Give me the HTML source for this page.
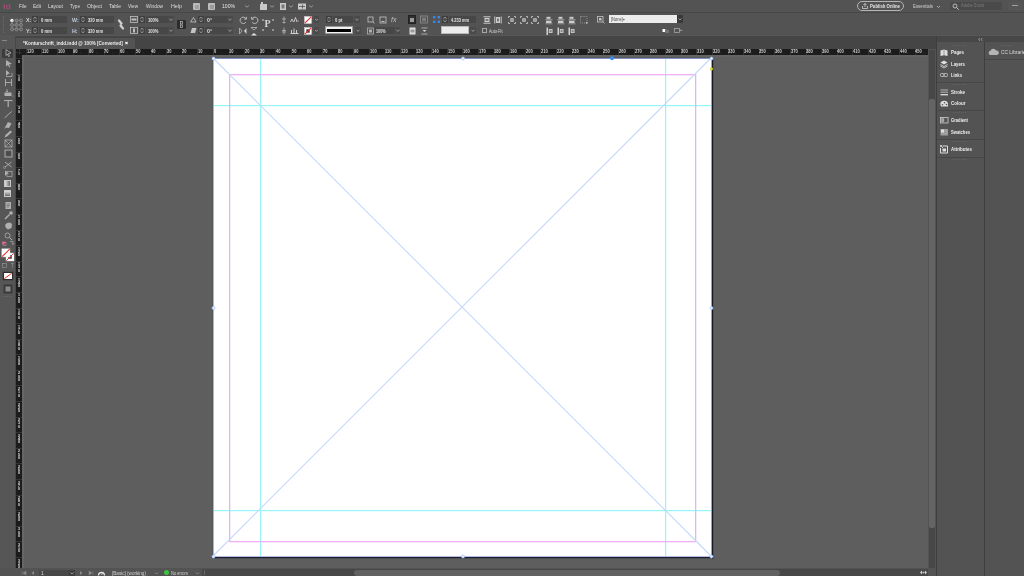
<!DOCTYPE html>
<html><head><meta charset="utf-8">
<style>
*{margin:0;padding:0;box-sizing:border-box}
html,body{width:1024px;height:576px;overflow:hidden;background:#535353;font-family:"Liberation Sans",sans-serif;color:#d8d8d8}
.a{position:absolute}
.rl{position:absolute;font-size:5px;line-height:5px;color:#d0d0d0;font-weight:bold;white-space:nowrap;transform:scaleX(0.8);transform-origin:0 0}
.rv{position:absolute}
.rv{font-size:4.4px;line-height:3.3px;color:#cccccc;font-weight:bold;text-align:center;word-break:break-all}
.t{position:absolute;font-size:6px;line-height:7px;white-space:nowrap;color:#dcdcdc}
</style></head><body><div style="position:absolute;left:0;top:0;width:1024px;height:576px;will-change:transform">

<div class="a" style="left:0;top:0;width:1024px;height:12px;background:#535353"></div>
<div class="a" style="left:0;top:12px;width:1024px;height:1px;background:#474747"></div>
<div class="a" style="left:0;top:13px;width:1024px;height:23px;background:#535353"></div>
<div class="a" style="left:0;top:35px;width:1024px;height:1px;background:#575757"></div>
<div class="a" style="left:0;top:36px;width:936px;height:13px;background:#454545"></div>
<div class="a" style="left:16px;top:38px;width:119px;height:11px;background:#535353"></div>
<div class="a" style="left:0;top:36px;width:16px;height:540px;background:#565656"></div>
<div class="a" style="left:22px;top:55px;width:906px;height:513px;background:#5e5e5e"></div>
<div class="a" style="left:16px;top:49px;width:912px;height:6px;background:#1c1c1c"></div>
<div class="a" style="left:16px;top:55px;width:6px;height:513px;background:#1c1c1c"></div>
<div class="a" style="left:22px;top:55px;width:1.5px;height:513px;background:#666666"></div>
<div class="a" style="left:22px;top:55px;width:906px;height:2px;background:#636363"></div>
<div class="a" style="left:928px;top:49px;width:8px;height:527px;background:#535353"></div>
<div class="a" style="left:929px;top:50px;width:6px;height:518px;background:#474747"></div>
<div class="a" style="left:929px;top:99px;width:6px;height:429px;background:#646464;border-radius:2px"></div>
<div class="a" style="left:0;top:568px;width:936px;height:8px;background:#535353"></div>
<div class="a" style="left:936px;top:36px;width:88px;height:540px;background:#474747"></div>
<div class="a" style="left:936px;top:42px;width:48px;height:534px;background:#535353"></div>
<div class="a" style="left:985px;top:42px;width:39px;height:534px;background:#535353"></div>
<div class="a" style="left:26px;top:49px;width:1px;height:6px;background:#343434"></div><div class="a" style="left:34px;top:52px;width:1px;height:2px;background:#262626"></div><div class="rl" style="left:26.5px;top:49.4px">120</div><div class="a" style="left:41px;top:49px;width:1px;height:6px;background:#343434"></div><div class="a" style="left:49px;top:52px;width:1px;height:2px;background:#262626"></div><div class="rl" style="left:42.1px;top:49.4px">110</div><div class="a" style="left:57px;top:49px;width:1px;height:6px;background:#343434"></div><div class="a" style="left:65px;top:52px;width:1px;height:2px;background:#262626"></div><div class="rl" style="left:57.7px;top:49.4px">100</div><div class="a" style="left:73px;top:49px;width:1px;height:6px;background:#343434"></div><div class="a" style="left:80px;top:52px;width:1px;height:2px;background:#262626"></div><div class="rl" style="left:73.3px;top:49.4px">90</div><div class="a" style="left:88px;top:49px;width:1px;height:6px;background:#343434"></div><div class="a" style="left:96px;top:52px;width:1px;height:2px;background:#262626"></div><div class="rl" style="left:88.8px;top:49.4px">80</div><div class="a" style="left:104px;top:49px;width:1px;height:6px;background:#343434"></div><div class="a" style="left:112px;top:52px;width:1px;height:2px;background:#262626"></div><div class="rl" style="left:104.4px;top:49.4px">70</div><div class="a" style="left:119px;top:49px;width:1px;height:6px;background:#343434"></div><div class="a" style="left:127px;top:52px;width:1px;height:2px;background:#262626"></div><div class="rl" style="left:120.0px;top:49.4px">60</div><div class="a" style="left:135px;top:49px;width:1px;height:6px;background:#343434"></div><div class="a" style="left:143px;top:52px;width:1px;height:2px;background:#262626"></div><div class="rl" style="left:135.6px;top:49.4px">50</div><div class="a" style="left:151px;top:49px;width:1px;height:6px;background:#343434"></div><div class="a" style="left:158px;top:52px;width:1px;height:2px;background:#262626"></div><div class="rl" style="left:151.2px;top:49.4px">40</div><div class="a" style="left:166px;top:49px;width:1px;height:6px;background:#343434"></div><div class="a" style="left:174px;top:52px;width:1px;height:2px;background:#262626"></div><div class="rl" style="left:166.8px;top:49.4px">30</div><div class="a" style="left:182px;top:49px;width:1px;height:6px;background:#343434"></div><div class="a" style="left:190px;top:52px;width:1px;height:2px;background:#262626"></div><div class="rl" style="left:182.4px;top:49.4px">20</div><div class="a" style="left:197px;top:49px;width:1px;height:6px;background:#343434"></div><div class="a" style="left:205px;top:52px;width:1px;height:2px;background:#262626"></div><div class="rl" style="left:198.0px;top:49.4px">10</div><div class="a" style="left:213px;top:49px;width:1px;height:6px;background:#343434"></div><div class="a" style="left:221px;top:52px;width:1px;height:2px;background:#262626"></div><div class="rl" style="left:213.6px;top:49.4px">0</div><div class="a" style="left:229px;top:49px;width:1px;height:6px;background:#343434"></div><div class="a" style="left:236px;top:52px;width:1px;height:2px;background:#262626"></div><div class="rl" style="left:229.2px;top:49.4px">10</div><div class="a" style="left:244px;top:49px;width:1px;height:6px;background:#343434"></div><div class="a" style="left:252px;top:52px;width:1px;height:2px;background:#262626"></div><div class="rl" style="left:244.8px;top:49.4px">20</div><div class="a" style="left:260px;top:49px;width:1px;height:6px;background:#343434"></div><div class="a" style="left:268px;top:52px;width:1px;height:2px;background:#262626"></div><div class="rl" style="left:260.4px;top:49.4px">30</div><div class="a" style="left:275px;top:49px;width:1px;height:6px;background:#343434"></div><div class="a" style="left:283px;top:52px;width:1px;height:2px;background:#262626"></div><div class="rl" style="left:276.0px;top:49.4px">40</div><div class="a" style="left:291px;top:49px;width:1px;height:6px;background:#343434"></div><div class="a" style="left:299px;top:52px;width:1px;height:2px;background:#262626"></div><div class="rl" style="left:291.6px;top:49.4px">50</div><div class="a" style="left:307px;top:49px;width:1px;height:6px;background:#343434"></div><div class="a" style="left:314px;top:52px;width:1px;height:2px;background:#262626"></div><div class="rl" style="left:307.2px;top:49.4px">60</div><div class="a" style="left:322px;top:49px;width:1px;height:6px;background:#343434"></div><div class="a" style="left:330px;top:52px;width:1px;height:2px;background:#262626"></div><div class="rl" style="left:322.8px;top:49.4px">70</div><div class="a" style="left:338px;top:49px;width:1px;height:6px;background:#343434"></div><div class="a" style="left:346px;top:52px;width:1px;height:2px;background:#262626"></div><div class="rl" style="left:338.4px;top:49.4px">80</div><div class="a" style="left:353px;top:49px;width:1px;height:6px;background:#343434"></div><div class="a" style="left:361px;top:52px;width:1px;height:2px;background:#262626"></div><div class="rl" style="left:353.9px;top:49.4px">90</div><div class="a" style="left:369px;top:49px;width:1px;height:6px;background:#343434"></div><div class="a" style="left:377px;top:52px;width:1px;height:2px;background:#262626"></div><div class="rl" style="left:369.5px;top:49.4px">100</div><div class="a" style="left:385px;top:49px;width:1px;height:6px;background:#343434"></div><div class="a" style="left:392px;top:52px;width:1px;height:2px;background:#262626"></div><div class="rl" style="left:385.1px;top:49.4px">110</div><div class="a" style="left:400px;top:49px;width:1px;height:6px;background:#343434"></div><div class="a" style="left:408px;top:52px;width:1px;height:2px;background:#262626"></div><div class="rl" style="left:400.7px;top:49.4px">120</div><div class="a" style="left:416px;top:49px;width:1px;height:6px;background:#343434"></div><div class="a" style="left:424px;top:52px;width:1px;height:2px;background:#262626"></div><div class="rl" style="left:416.3px;top:49.4px">130</div><div class="a" style="left:431px;top:49px;width:1px;height:6px;background:#343434"></div><div class="a" style="left:439px;top:52px;width:1px;height:2px;background:#262626"></div><div class="rl" style="left:431.9px;top:49.4px">140</div><div class="a" style="left:447px;top:49px;width:1px;height:6px;background:#343434"></div><div class="a" style="left:455px;top:52px;width:1px;height:2px;background:#262626"></div><div class="rl" style="left:447.5px;top:49.4px">150</div><div class="a" style="left:462px;top:49px;width:1px;height:6px;background:#343434"></div><div class="a" style="left:470px;top:52px;width:1px;height:2px;background:#262626"></div><div class="rl" style="left:463.1px;top:49.4px">160</div><div class="a" style="left:478px;top:49px;width:1px;height:6px;background:#343434"></div><div class="a" style="left:486px;top:52px;width:1px;height:2px;background:#262626"></div><div class="rl" style="left:478.7px;top:49.4px">170</div><div class="a" style="left:494px;top:49px;width:1px;height:6px;background:#343434"></div><div class="a" style="left:501px;top:52px;width:1px;height:2px;background:#262626"></div><div class="rl" style="left:494.3px;top:49.4px">180</div><div class="a" style="left:509px;top:49px;width:1px;height:6px;background:#343434"></div><div class="a" style="left:517px;top:52px;width:1px;height:2px;background:#262626"></div><div class="rl" style="left:509.9px;top:49.4px">190</div><div class="a" style="left:525px;top:49px;width:1px;height:6px;background:#343434"></div><div class="a" style="left:533px;top:52px;width:1px;height:2px;background:#262626"></div><div class="rl" style="left:525.5px;top:49.4px">200</div><div class="a" style="left:540px;top:49px;width:1px;height:6px;background:#343434"></div><div class="a" style="left:548px;top:52px;width:1px;height:2px;background:#262626"></div><div class="rl" style="left:541.1px;top:49.4px">210</div><div class="a" style="left:556px;top:49px;width:1px;height:6px;background:#343434"></div><div class="a" style="left:564px;top:52px;width:1px;height:2px;background:#262626"></div><div class="rl" style="left:556.7px;top:49.4px">220</div><div class="a" style="left:572px;top:49px;width:1px;height:6px;background:#343434"></div><div class="a" style="left:579px;top:52px;width:1px;height:2px;background:#262626"></div><div class="rl" style="left:572.3px;top:49.4px">230</div><div class="a" style="left:587px;top:49px;width:1px;height:6px;background:#343434"></div><div class="a" style="left:595px;top:52px;width:1px;height:2px;background:#262626"></div><div class="rl" style="left:587.9px;top:49.4px">240</div><div class="a" style="left:603px;top:49px;width:1px;height:6px;background:#343434"></div><div class="a" style="left:611px;top:52px;width:1px;height:2px;background:#262626"></div><div class="rl" style="left:603.4px;top:49.4px">250</div><div class="a" style="left:618px;top:49px;width:1px;height:6px;background:#343434"></div><div class="a" style="left:626px;top:52px;width:1px;height:2px;background:#262626"></div><div class="rl" style="left:619.0px;top:49.4px">260</div><div class="a" style="left:634px;top:49px;width:1px;height:6px;background:#343434"></div><div class="a" style="left:642px;top:52px;width:1px;height:2px;background:#262626"></div><div class="rl" style="left:634.6px;top:49.4px">270</div><div class="a" style="left:650px;top:49px;width:1px;height:6px;background:#343434"></div><div class="a" style="left:657px;top:52px;width:1px;height:2px;background:#262626"></div><div class="rl" style="left:650.2px;top:49.4px">280</div><div class="a" style="left:665px;top:49px;width:1px;height:6px;background:#343434"></div><div class="a" style="left:673px;top:52px;width:1px;height:2px;background:#262626"></div><div class="rl" style="left:665.8px;top:49.4px">290</div><div class="a" style="left:681px;top:49px;width:1px;height:6px;background:#343434"></div><div class="a" style="left:689px;top:52px;width:1px;height:2px;background:#262626"></div><div class="rl" style="left:681.4px;top:49.4px">300</div><div class="a" style="left:696px;top:49px;width:1px;height:6px;background:#343434"></div><div class="a" style="left:704px;top:52px;width:1px;height:2px;background:#262626"></div><div class="rl" style="left:697.0px;top:49.4px">310</div><div class="a" style="left:712px;top:49px;width:1px;height:6px;background:#343434"></div><div class="a" style="left:720px;top:52px;width:1px;height:2px;background:#262626"></div><div class="rl" style="left:712.6px;top:49.4px">320</div><div class="a" style="left:728px;top:49px;width:1px;height:6px;background:#343434"></div><div class="a" style="left:735px;top:52px;width:1px;height:2px;background:#262626"></div><div class="rl" style="left:728.2px;top:49.4px">330</div><div class="a" style="left:743px;top:49px;width:1px;height:6px;background:#343434"></div><div class="a" style="left:751px;top:52px;width:1px;height:2px;background:#262626"></div><div class="rl" style="left:743.8px;top:49.4px">340</div><div class="a" style="left:759px;top:49px;width:1px;height:6px;background:#343434"></div><div class="a" style="left:767px;top:52px;width:1px;height:2px;background:#262626"></div><div class="rl" style="left:759.4px;top:49.4px">350</div><div class="a" style="left:774px;top:49px;width:1px;height:6px;background:#343434"></div><div class="a" style="left:782px;top:52px;width:1px;height:2px;background:#262626"></div><div class="rl" style="left:775.0px;top:49.4px">360</div><div class="a" style="left:790px;top:49px;width:1px;height:6px;background:#343434"></div><div class="a" style="left:798px;top:52px;width:1px;height:2px;background:#262626"></div><div class="rl" style="left:790.6px;top:49.4px">370</div><div class="a" style="left:806px;top:49px;width:1px;height:6px;background:#343434"></div><div class="a" style="left:813px;top:52px;width:1px;height:2px;background:#262626"></div><div class="rl" style="left:806.2px;top:49.4px">380</div><div class="a" style="left:821px;top:49px;width:1px;height:6px;background:#343434"></div><div class="a" style="left:829px;top:52px;width:1px;height:2px;background:#262626"></div><div class="rl" style="left:821.8px;top:49.4px">390</div><div class="a" style="left:837px;top:49px;width:1px;height:6px;background:#343434"></div><div class="a" style="left:845px;top:52px;width:1px;height:2px;background:#262626"></div><div class="rl" style="left:837.4px;top:49.4px">400</div><div class="a" style="left:852px;top:49px;width:1px;height:6px;background:#343434"></div><div class="a" style="left:860px;top:52px;width:1px;height:2px;background:#262626"></div><div class="rl" style="left:852.9px;top:49.4px">410</div><div class="a" style="left:868px;top:49px;width:1px;height:6px;background:#343434"></div><div class="a" style="left:876px;top:52px;width:1px;height:2px;background:#262626"></div><div class="rl" style="left:868.5px;top:49.4px">420</div><div class="a" style="left:884px;top:49px;width:1px;height:6px;background:#343434"></div><div class="a" style="left:891px;top:52px;width:1px;height:2px;background:#262626"></div><div class="rl" style="left:884.1px;top:49.4px">430</div><div class="a" style="left:899px;top:49px;width:1px;height:6px;background:#343434"></div><div class="a" style="left:907px;top:52px;width:1px;height:2px;background:#262626"></div><div class="rl" style="left:899.7px;top:49.4px">440</div><div class="a" style="left:915px;top:49px;width:1px;height:6px;background:#343434"></div><div class="a" style="left:923px;top:52px;width:1px;height:2px;background:#262626"></div><div class="rl" style="left:915.3px;top:49.4px">450</div><div class="a" style="left:0;top:0;width:1024px;height:568px;overflow:hidden"><div class="a" style="left:16px;top:58px;width:6px;height:1px;background:#343434"></div><div class="a" style="left:19px;top:66px;width:2px;height:1px;background:#262626"></div><div class="rv" style="left:16.5px;top:59.5px;width:5px">0</div><div class="a" style="left:16px;top:74px;width:6px;height:1px;background:#343434"></div><div class="a" style="left:19px;top:81px;width:2px;height:1px;background:#262626"></div><div class="rv" style="left:16.5px;top:75.1px;width:5px">1<br>0</div><div class="a" style="left:16px;top:89px;width:6px;height:1px;background:#343434"></div><div class="a" style="left:19px;top:97px;width:2px;height:1px;background:#262626"></div><div class="rv" style="left:16.5px;top:90.7px;width:5px">2<br>0</div><div class="a" style="left:16px;top:105px;width:6px;height:1px;background:#343434"></div><div class="a" style="left:19px;top:113px;width:2px;height:1px;background:#262626"></div><div class="rv" style="left:16.5px;top:106.3px;width:5px">3<br>0</div><div class="a" style="left:16px;top:120px;width:6px;height:1px;background:#343434"></div><div class="a" style="left:19px;top:128px;width:2px;height:1px;background:#262626"></div><div class="rv" style="left:16.5px;top:121.9px;width:5px">4<br>0</div><div class="a" style="left:16px;top:136px;width:6px;height:1px;background:#343434"></div><div class="a" style="left:19px;top:144px;width:2px;height:1px;background:#262626"></div><div class="rv" style="left:16.5px;top:137.5px;width:5px">5<br>0</div><div class="a" style="left:16px;top:152px;width:6px;height:1px;background:#343434"></div><div class="a" style="left:19px;top:159px;width:2px;height:1px;background:#262626"></div><div class="rv" style="left:16.5px;top:153.1px;width:5px">6<br>0</div><div class="a" style="left:16px;top:167px;width:6px;height:1px;background:#343434"></div><div class="a" style="left:19px;top:175px;width:2px;height:1px;background:#262626"></div><div class="rv" style="left:16.5px;top:168.7px;width:5px">7<br>0</div><div class="a" style="left:16px;top:183px;width:6px;height:1px;background:#343434"></div><div class="a" style="left:19px;top:191px;width:2px;height:1px;background:#262626"></div><div class="rv" style="left:16.5px;top:184.2px;width:5px">8<br>0</div><div class="a" style="left:16px;top:198px;width:6px;height:1px;background:#343434"></div><div class="a" style="left:19px;top:206px;width:2px;height:1px;background:#262626"></div><div class="rv" style="left:16.5px;top:199.8px;width:5px">9<br>0</div><div class="a" style="left:16px;top:214px;width:6px;height:1px;background:#343434"></div><div class="a" style="left:19px;top:222px;width:2px;height:1px;background:#262626"></div><div class="rv" style="left:16.5px;top:215.4px;width:5px">1<br>0<br>0</div><div class="a" style="left:16px;top:230px;width:6px;height:1px;background:#343434"></div><div class="a" style="left:19px;top:237px;width:2px;height:1px;background:#262626"></div><div class="rv" style="left:16.5px;top:231.0px;width:5px">1<br>1<br>0</div><div class="a" style="left:16px;top:245px;width:6px;height:1px;background:#343434"></div><div class="a" style="left:19px;top:253px;width:2px;height:1px;background:#262626"></div><div class="rv" style="left:16.5px;top:246.6px;width:5px">1<br>2<br>0</div><div class="a" style="left:16px;top:261px;width:6px;height:1px;background:#343434"></div><div class="a" style="left:19px;top:269px;width:2px;height:1px;background:#262626"></div><div class="rv" style="left:16.5px;top:262.2px;width:5px">1<br>3<br>0</div><div class="a" style="left:16px;top:276px;width:6px;height:1px;background:#343434"></div><div class="a" style="left:19px;top:284px;width:2px;height:1px;background:#262626"></div><div class="rv" style="left:16.5px;top:277.8px;width:5px">1<br>4<br>0</div><div class="a" style="left:16px;top:292px;width:6px;height:1px;background:#343434"></div><div class="a" style="left:19px;top:300px;width:2px;height:1px;background:#262626"></div><div class="rv" style="left:16.5px;top:293.4px;width:5px">1<br>5<br>0</div><div class="a" style="left:16px;top:308px;width:6px;height:1px;background:#343434"></div><div class="a" style="left:19px;top:315px;width:2px;height:1px;background:#262626"></div><div class="rv" style="left:16.5px;top:309.0px;width:5px">1<br>6<br>0</div><div class="a" style="left:16px;top:323px;width:6px;height:1px;background:#343434"></div><div class="a" style="left:19px;top:331px;width:2px;height:1px;background:#262626"></div><div class="rv" style="left:16.5px;top:324.6px;width:5px">1<br>7<br>0</div><div class="a" style="left:16px;top:339px;width:6px;height:1px;background:#343434"></div><div class="a" style="left:19px;top:346px;width:2px;height:1px;background:#262626"></div><div class="rv" style="left:16.5px;top:340.2px;width:5px">1<br>8<br>0</div><div class="a" style="left:16px;top:354px;width:6px;height:1px;background:#343434"></div><div class="a" style="left:19px;top:362px;width:2px;height:1px;background:#262626"></div><div class="rv" style="left:16.5px;top:355.8px;width:5px">1<br>9<br>0</div><div class="a" style="left:16px;top:370px;width:6px;height:1px;background:#343434"></div><div class="a" style="left:19px;top:378px;width:2px;height:1px;background:#262626"></div><div class="rv" style="left:16.5px;top:371.4px;width:5px">2<br>0<br>0</div><div class="a" style="left:16px;top:385px;width:6px;height:1px;background:#343434"></div><div class="a" style="left:19px;top:393px;width:2px;height:1px;background:#262626"></div><div class="rv" style="left:16.5px;top:387.0px;width:5px">2<br>1<br>0</div><div class="a" style="left:16px;top:401px;width:6px;height:1px;background:#343434"></div><div class="a" style="left:19px;top:409px;width:2px;height:1px;background:#262626"></div><div class="rv" style="left:16.5px;top:402.6px;width:5px">2<br>2<br>0</div><div class="a" style="left:16px;top:417px;width:6px;height:1px;background:#343434"></div><div class="a" style="left:19px;top:424px;width:2px;height:1px;background:#262626"></div><div class="rv" style="left:16.5px;top:418.2px;width:5px">2<br>3<br>0</div><div class="a" style="left:16px;top:432px;width:6px;height:1px;background:#343434"></div><div class="a" style="left:19px;top:440px;width:2px;height:1px;background:#262626"></div><div class="rv" style="left:16.5px;top:433.8px;width:5px">2<br>4<br>0</div><div class="a" style="left:16px;top:448px;width:6px;height:1px;background:#343434"></div><div class="a" style="left:19px;top:456px;width:2px;height:1px;background:#262626"></div><div class="rv" style="left:16.5px;top:449.3px;width:5px">2<br>5<br>0</div><div class="a" style="left:16px;top:463px;width:6px;height:1px;background:#343434"></div><div class="a" style="left:19px;top:471px;width:2px;height:1px;background:#262626"></div><div class="rv" style="left:16.5px;top:464.9px;width:5px">2<br>6<br>0</div><div class="a" style="left:16px;top:479px;width:6px;height:1px;background:#343434"></div><div class="a" style="left:19px;top:487px;width:2px;height:1px;background:#262626"></div><div class="rv" style="left:16.5px;top:480.5px;width:5px">2<br>7<br>0</div><div class="a" style="left:16px;top:495px;width:6px;height:1px;background:#343434"></div><div class="a" style="left:19px;top:502px;width:2px;height:1px;background:#262626"></div><div class="rv" style="left:16.5px;top:496.1px;width:5px">2<br>8<br>0</div><div class="a" style="left:16px;top:510px;width:6px;height:1px;background:#343434"></div><div class="a" style="left:19px;top:518px;width:2px;height:1px;background:#262626"></div><div class="rv" style="left:16.5px;top:511.7px;width:5px">2<br>9<br>0</div><div class="a" style="left:16px;top:526px;width:6px;height:1px;background:#343434"></div><div class="a" style="left:19px;top:534px;width:2px;height:1px;background:#262626"></div><div class="rv" style="left:16.5px;top:527.3px;width:5px">3<br>0<br>0</div><div class="a" style="left:16px;top:541px;width:6px;height:1px;background:#343434"></div><div class="a" style="left:19px;top:549px;width:2px;height:1px;background:#262626"></div><div class="rv" style="left:16.5px;top:542.9px;width:5px">3<br>1<br>0</div><div class="a" style="left:16px;top:557px;width:6px;height:1px;background:#343434"></div><div class="a" style="left:19px;top:565px;width:2px;height:1px;background:#262626"></div><div class="rv" style="left:16.5px;top:558.5px;width:5px">3<br>2<br>0</div></div>
<div class="a" style="left:213px;top:58px;width:499px;height:499px;background:#fff"></div>
<div class="a" style="left:712px;top:59px;width:1px;height:500px;background:#181a26;box-shadow:0.5px 0 0 rgba(30,32,48,0.4)"></div>
<div class="a" style="left:214px;top:557px;width:499px;height:1px;background:#1e2030;box-shadow:0 0.5px 0 rgba(30,32,48,0.5)"></div>
<div class="a" style="left:260px;top:58px;width:1px;height:499px;background:#98f4f6;box-shadow:1px 0 0 rgba(150,244,246,0.22)"></div><div class="a" style="left:665px;top:58px;width:1px;height:499px;background:#98f4f6;box-shadow:1px 0 0 rgba(150,244,246,0.22)"></div><div class="a" style="left:213px;top:105px;width:499px;height:1px;background:#98f4f6;box-shadow:0 1px 0 rgba(150,244,246,0.22)"></div><div class="a" style="left:213px;top:510px;width:499px;height:1px;background:#98f4f6;box-shadow:0 1px 0 rgba(150,244,246,0.22)"></div><div class="a" style="left:229px;top:74px;width:467px;height:1px;background:#f2b0f6;box-shadow:0 1px 0 rgba(240,176,246,0.3)"></div><div class="a" style="left:229px;top:541px;width:467px;height:1px;background:#f2b0f6;box-shadow:0 1px 0 rgba(240,176,246,0.3)"></div><div class="a" style="left:229px;top:74px;width:1px;height:468px;background:#d8b8f8;box-shadow:1px 0 0 rgba(216,184,248,0.3)"></div><div class="a" style="left:695px;top:74px;width:1px;height:468px;background:#d8b8f8;box-shadow:1px 0 0 rgba(216,184,248,0.3)"></div>
<svg class="a" style="left:0;top:0" width="1024" height="576" viewBox="0 0 1024 576"><line x1="213.5" y1="58.5" x2="711.5" y2="556.5" stroke="#c4d8fa" stroke-width="1.1"/><line x1="711" y1="58" x2="213" y2="556" stroke="#c4d8fa" stroke-width="1.1"/><path d="M213.5 556 V58" fill="none" stroke="#a8b0dc" stroke-width="1"/><path d="M213 58.5 H711" fill="none" stroke="#848cc4" stroke-width="1"/><path d="M212.5 557 V57.5 H712" fill="none" stroke="#545a5a" stroke-width="1"/><path d="M711.5 58 V556" fill="none" stroke="#98a2d8" stroke-width="1"/><path d="M712 556.5 H213" fill="none" stroke="#b4bce4" stroke-width="1"/><circle cx="213.5" cy="58.5" r="1.5" fill="#eef4ff" stroke="#9cbcf4" stroke-width="0.7"/><circle cx="213.5" cy="308.0" r="1.5" fill="#eef4ff" stroke="#9cbcf4" stroke-width="0.7"/><circle cx="213.5" cy="556.5" r="1.5" fill="#eef4ff" stroke="#9cbcf4" stroke-width="0.7"/><circle cx="463.0" cy="58.5" r="1.5" fill="#eef4ff" stroke="#9cbcf4" stroke-width="0.7"/><circle cx="463.0" cy="556.5" r="1.5" fill="#eef4ff" stroke="#9cbcf4" stroke-width="0.7"/><circle cx="711.5" cy="58.5" r="1.5" fill="#eef4ff" stroke="#9cbcf4" stroke-width="0.7"/><circle cx="711.5" cy="308.0" r="1.5" fill="#eef4ff" stroke="#9cbcf4" stroke-width="0.7"/><circle cx="711.5" cy="556.5" r="1.5" fill="#eef4ff" stroke="#9cbcf4" stroke-width="0.7"/><circle cx="612" cy="58.3" r="2" fill="#3a8cf2"/><circle cx="711.5" cy="69" r="1.4" fill="#e0e030" stroke="#b0b000" stroke-width="0.3"/></svg>
<div class="a" style="left:0px;top:0px;width:15px;height:12px;background:#4e5450;"></div><div class="a" style="left:2.8px;top:1.6px;font-size:8px;line-height:9px;color:#a54a72;font-weight:bold;white-space:nowrap;transform:scaleX(1.125);transform-origin:0 0;">Id</div><div class="a" style="left:19px;top:2.8px;font-size:5.5px;line-height:6.5px;color:#dedede;font-weight:normal;white-space:nowrap;transform:scaleX(0.846);transform-origin:0 0;">File</div><div class="a" style="left:33px;top:2.8px;font-size:5.5px;line-height:6.5px;color:#dedede;font-weight:normal;white-space:nowrap;transform:scaleX(0.844);transform-origin:0 0;">Edit</div><div class="a" style="left:48px;top:2.8px;font-size:5.5px;line-height:6.5px;color:#dedede;font-weight:normal;white-space:nowrap;transform:scaleX(0.908);transform-origin:0 0;">Layout</div><div class="a" style="left:70px;top:2.8px;font-size:5.5px;line-height:6.5px;color:#dedede;font-weight:normal;white-space:nowrap;transform:scaleX(0.839);transform-origin:0 0;">Type</div><div class="a" style="left:87px;top:2.8px;font-size:5.5px;line-height:6.5px;color:#dedede;font-weight:normal;white-space:nowrap;transform:scaleX(0.944);transform-origin:0 0;">Object</div><div class="a" style="left:109px;top:2.8px;font-size:5.5px;line-height:6.5px;color:#dedede;font-weight:normal;white-space:nowrap;transform:scaleX(0.913);transform-origin:0 0;">Table</div><div class="a" style="left:128px;top:2.8px;font-size:5.5px;line-height:6.5px;color:#dedede;font-weight:normal;white-space:nowrap;transform:scaleX(0.846);transform-origin:0 0;">View</div><div class="a" style="left:146px;top:2.8px;font-size:5.5px;line-height:6.5px;color:#dedede;font-weight:normal;white-space:nowrap;transform:scaleX(0.869);transform-origin:0 0;">Window</div><div class="a" style="left:171px;top:2.8px;font-size:5.5px;line-height:6.5px;color:#dedede;font-weight:normal;white-space:nowrap;transform:scaleX(0.972);transform-origin:0 0;">Help</div><div class="a" style="left:193px;top:3px;width:7px;height:7px;background:#bcbcbc;border-radius:1px"></div><div class="a" style="left:194.5px;top:4.5px;width:4px;height:4px;background:#a0a0a0;"></div><div class="a" style="left:208px;top:3px;width:7px;height:7px;background:#bcbcbc;border-radius:1px"></div><div class="a" style="left:209.5px;top:4.5px;width:4px;height:4px;background:#9a9a9a;"></div><div class="a" style="left:222px;top:2.8px;font-size:5.5px;line-height:6.5px;color:#e4e4e4;font-weight:normal;white-space:nowrap;transform:scaleX(0.924);transform-origin:0 0;">100%</div><svg class="a" style="left:244px;top:4px" width="6" height="4" viewBox="0 0 6 4"><path d="M1 1.5 L3 3.2 L5 1.5" fill="none" stroke="#a0a0a0" stroke-width="0.9"/></svg><div class="a" style="left:260px;top:4px;width:7px;height:6px;background:#c8c8c8;"></div><div class="a" style="left:261px;top:2px;width:2px;height:2px;background:#c8c8c8;"></div><svg class="a" style="left:269px;top:4px" width="6" height="4" viewBox="0 0 6 4"><path d="M1 1.5 L3 3.2 L5 1.5" fill="none" stroke="#a0a0a0" stroke-width="0.9"/></svg><svg class="a" style="left:279px;top:2px" width="8" height="9" viewBox="0 0 8 9"><rect x="1" y="1" width="6" height="7" fill="#c8c8c8"/><rect x="2.5" y="2.5" width="3" height="4" fill="#7a7a7a"/></svg><svg class="a" style="left:288px;top:4px" width="6" height="4" viewBox="0 0 6 4"><path d="M1 1.5 L3 3.2 L5 1.5" fill="none" stroke="#a0a0a0" stroke-width="0.9"/></svg><svg class="a" style="left:298px;top:3px" width="8" height="7" viewBox="0 0 8 7"><rect x="0" y="0.5" width="8" height="6" fill="#c8c8c8"/><rect x="4" y="1.5" width="0.8" height="4" fill="#555"/><rect x="1" y="3" width="6" height="0.8" fill="#555"/></svg><svg class="a" style="left:308px;top:4px" width="6" height="4" viewBox="0 0 6 4"><path d="M1 1.5 L3 3.2 L5 1.5" fill="none" stroke="#a0a0a0" stroke-width="0.9"/></svg><div class="a" style="left:857px;top:1px;width:47px;height:10px;border:1px solid #b4b4b4;border-radius:5px"></div><svg class="a" style="left:862px;top:3px" width="6" height="6" viewBox="0 0 6 6"><path d="M0.5 3 V5.5 H5.5 V3" fill="none" stroke="#d0d0d0" stroke-width="0.8"/><path d="M3 0.5 V4 M1.5 2 L3 0.5 L4.5 2" fill="none" stroke="#d0d0d0" stroke-width="0.8"/></svg><div class="a" style="left:870px;top:3px;font-size:5.2px;line-height:6.2px;color:#e4e4e4;font-weight:bold;white-space:nowrap;transform:scaleX(0.824);transform-origin:0 0;">Publish Online</div><div class="a" style="left:913px;top:3px;font-size:5.2px;line-height:6.2px;color:#cfcfcf;font-weight:normal;white-space:nowrap;transform:scaleX(0.844);transform-origin:0 0;">Essentials</div><svg class="a" style="left:936px;top:4.5px" width="5" height="4" viewBox="0 0 5 4"><path d="M1 1 L2.5 2.5 L4 1" fill="none" stroke="#c0c0c0" stroke-width="0.8"/></svg><div class="a" style="left:950px;top:2px;width:52px;height:8px;background:#4a4a4a;"></div><svg class="a" style="left:952px;top:2.5px" width="8" height="7" viewBox="0 0 8 7"><circle cx="3" cy="3" r="2" fill="none" stroke="#c4c4c4" stroke-width="0.9"/><path d="M4.5 4.5 L6.8 6.7" stroke="#c4c4c4" stroke-width="1"/></svg><div class="a" style="left:961px;top:3.3px;font-size:4.8px;line-height:5.8px;color:#7c7c7c;font-weight:normal;white-space:nowrap;transform:scaleX(0.845);transform-origin:0 0;">Adobe Stock</div><div class="a" style="left:1008px;top:2px;width:14px;height:8px;background:#565656;border-radius:2px"></div><div class="a" style="left:1012px;top:5px;width:6px;height:1.2px;background:#a0a0a0;"></div><div class="a" style="left:3px;top:16px;width:1px;height:1px;background:#6a6a6a;"></div><div class="a" style="left:3px;top:18px;width:1px;height:1px;background:#6a6a6a;"></div><div class="a" style="left:3px;top:20px;width:1px;height:1px;background:#6a6a6a;"></div><div class="a" style="left:3px;top:22px;width:1px;height:1px;background:#6a6a6a;"></div><div class="a" style="left:3px;top:24px;width:1px;height:1px;background:#6a6a6a;"></div><div class="a" style="left:3px;top:26px;width:1px;height:1px;background:#6a6a6a;"></div><div class="a" style="left:3px;top:28px;width:1px;height:1px;background:#6a6a6a;"></div><div class="a" style="left:3px;top:30px;width:1px;height:1px;background:#6a6a6a;"></div><div class="a" style="left:3px;top:32px;width:1px;height:1px;background:#6a6a6a;"></div><svg class="a" style="left:0px;top:0px" width="30" height="36" viewBox="0 0 30 36"><circle cx="12.0" cy="20.5" r="1.7" fill="#ffffff"/><circle cx="12.0" cy="24.9" r="1.5" fill="none" stroke="#a8a8a8" stroke-width="0.6"/><circle cx="12.0" cy="29.3" r="1.5" fill="none" stroke="#a8a8a8" stroke-width="0.6"/><circle cx="16.5" cy="20.5" r="1.5" fill="none" stroke="#a8a8a8" stroke-width="0.6"/><circle cx="16.5" cy="24.9" r="1.5" fill="none" stroke="#a8a8a8" stroke-width="0.6"/><circle cx="16.5" cy="29.3" r="1.5" fill="none" stroke="#a8a8a8" stroke-width="0.6"/><circle cx="21.0" cy="20.5" r="1.5" fill="none" stroke="#a8a8a8" stroke-width="0.6"/><circle cx="21.0" cy="24.9" r="1.5" fill="none" stroke="#a8a8a8" stroke-width="0.6"/><circle cx="21.0" cy="29.3" r="1.5" fill="none" stroke="#a8a8a8" stroke-width="0.6"/><path d="M12 20.5 H21 M12 24.9 H21 M12 29.3 H21 M12 20.5 V29.3 M16.5 20.5 V29.3 M21 20.5 V29.3" stroke="#8a8a8a" stroke-width="0.4"/></svg><div class="a" style="left:26px;top:16.6px;font-size:5.3px;line-height:6.3px;color:#d4d4d4;font-weight:bold;white-space:nowrap;">X:</div><div class="a" style="left:26px;top:27.6px;font-size:5.3px;line-height:6.3px;color:#d4d4d4;font-weight:bold;white-space:nowrap;">Y:</div><div class="a" style="left:32px;top:16px;width:6px;height:7px;background:#4a4a4a;border:0.5px solid #3e3e3e"></div><svg class="a" style="left:32px;top:16px" width="6" height="7" viewBox="0 0 6 7"><path d="M1.5 2.6 L3 1.2 L4.5 2.6" fill="none" stroke="#b8b8b8" stroke-width="0.7"/><path d="M1.5 4.4 L3 5.8 L4.5 4.4" fill="none" stroke="#b8b8b8" stroke-width="0.7"/></svg><div class="a" style="left:32px;top:27px;width:6px;height:7px;background:#4a4a4a;border:0.5px solid #3e3e3e"></div><svg class="a" style="left:32px;top:27px" width="6" height="7" viewBox="0 0 6 7"><path d="M1.5 2.6 L3 1.2 L4.5 2.6" fill="none" stroke="#b8b8b8" stroke-width="0.7"/><path d="M1.5 4.4 L3 5.8 L4.5 4.4" fill="none" stroke="#b8b8b8" stroke-width="0.7"/></svg><div class="a" style="left:39px;top:16px;width:28px;height:7px;background:#474747;"></div><div class="a" style="left:40.5px;top:16.6px;font-size:5.3px;line-height:6.3px;color:#e2e2e2;font-weight:bold;white-space:nowrap;transform:scaleX(0.794);transform-origin:0 0;">0 mm</div><div class="a" style="left:39px;top:27px;width:28px;height:7px;background:#474747;"></div><div class="a" style="left:40.5px;top:27.6px;font-size:5.3px;line-height:6.3px;color:#e2e2e2;font-weight:bold;white-space:nowrap;transform:scaleX(0.794);transform-origin:0 0;">0 mm</div><div class="a" style="left:72px;top:16.6px;font-size:5.3px;line-height:6.3px;color:#c0cce4;font-weight:bold;white-space:nowrap;">W:</div><div class="a" style="left:72px;top:27.6px;font-size:5.3px;line-height:6.3px;color:#c0cce4;font-weight:bold;white-space:nowrap;">H:</div><div class="a" style="left:80px;top:16px;width:6px;height:7px;background:#4a4a4a;border:0.5px solid #3e3e3e"></div><svg class="a" style="left:80px;top:16px" width="6" height="7" viewBox="0 0 6 7"><path d="M1.5 2.6 L3 1.2 L4.5 2.6" fill="none" stroke="#b8b8b8" stroke-width="0.7"/><path d="M1.5 4.4 L3 5.8 L4.5 4.4" fill="none" stroke="#b8b8b8" stroke-width="0.7"/></svg><div class="a" style="left:80px;top:27px;width:6px;height:7px;background:#4a4a4a;border:0.5px solid #3e3e3e"></div><svg class="a" style="left:80px;top:27px" width="6" height="7" viewBox="0 0 6 7"><path d="M1.5 2.6 L3 1.2 L4.5 2.6" fill="none" stroke="#b8b8b8" stroke-width="0.7"/><path d="M1.5 4.4 L3 5.8 L4.5 4.4" fill="none" stroke="#b8b8b8" stroke-width="0.7"/></svg><div class="a" style="left:86px;top:16px;width:28px;height:7px;background:#474747;"></div><div class="a" style="left:87.5px;top:16.6px;font-size:5.3px;line-height:6.3px;color:#e2e2e2;font-weight:bold;white-space:nowrap;transform:scaleX(0.760);transform-origin:0 0;">320 mm</div><div class="a" style="left:86px;top:27px;width:28px;height:7px;background:#474747;"></div><div class="a" style="left:87.5px;top:27.6px;font-size:5.3px;line-height:6.3px;color:#e2e2e2;font-weight:bold;white-space:nowrap;transform:scaleX(0.760);transform-origin:0 0;">320 mm</div><svg class="a" style="left:116px;top:19px" width="10" height="11" viewBox="0 0 10 11"><path d="M3 1.5 L5.5 4.5 M4.5 6.5 L7 9.5" stroke="#d0d0d0" stroke-width="2.2" stroke-linecap="round"/><path d="M4 4 L6 7" stroke="#d0d0d0" stroke-width="0.8"/></svg><svg class="a" style="left:130px;top:16px" width="8" height="7" viewBox="0 0 8 7"><rect x="0.5" y="0.5" width="7" height="6" fill="none" stroke="#c0c0c0" stroke-width="0.8"/><rect x="1.5" y="2.5" width="5" height="2" fill="#c0c0c0"/></svg><svg class="a" style="left:130px;top:27px" width="8" height="7" viewBox="0 0 8 7"><rect x="0.5" y="0.5" width="7" height="6" fill="none" stroke="#c0c0c0" stroke-width="0.8"/><rect x="3" y="1.5" width="2" height="4" fill="#c0c0c0"/></svg><div class="a" style="left:139px;top:16px;width:6px;height:7px;background:#4a4a4a;border:0.5px solid #3e3e3e"></div><svg class="a" style="left:139px;top:16px" width="6" height="7" viewBox="0 0 6 7"><path d="M1.5 2.6 L3 1.2 L4.5 2.6" fill="none" stroke="#b8b8b8" stroke-width="0.7"/><path d="M1.5 4.4 L3 5.8 L4.5 4.4" fill="none" stroke="#b8b8b8" stroke-width="0.7"/></svg><div class="a" style="left:139px;top:27px;width:6px;height:7px;background:#4a4a4a;border:0.5px solid #3e3e3e"></div><svg class="a" style="left:139px;top:27px" width="6" height="7" viewBox="0 0 6 7"><path d="M1.5 2.6 L3 1.2 L4.5 2.6" fill="none" stroke="#b8b8b8" stroke-width="0.7"/><path d="M1.5 4.4 L3 5.8 L4.5 4.4" fill="none" stroke="#b8b8b8" stroke-width="0.7"/></svg><div class="a" style="left:146px;top:16px;width:22px;height:7px;background:#474747;"></div><div class="a" style="left:147.5px;top:16.6px;font-size:5.3px;line-height:6.3px;color:#e2e2e2;font-weight:bold;white-space:nowrap;transform:scaleX(0.775);transform-origin:0 0;">100%</div><div class="a" style="left:146px;top:27px;width:22px;height:7px;background:#474747;"></div><div class="a" style="left:147.5px;top:27.6px;font-size:5.3px;line-height:6.3px;color:#e2e2e2;font-weight:bold;white-space:nowrap;transform:scaleX(0.775);transform-origin:0 0;">100%</div><div class="a" style="left:168px;top:16px;width:6px;height:7px;background:#4a4a4a;"></div><svg class="a" style="left:168px;top:16px" width="6" height="7" viewBox="0 0 6 7"><path d="M1.5 3 L3.0 4.3 L4.5 3" fill="none" stroke="#c0c0c0" stroke-width="0.7"/></svg><div class="a" style="left:168px;top:27px;width:6px;height:7px;background:#4a4a4a;"></div><svg class="a" style="left:168px;top:27px" width="6" height="7" viewBox="0 0 6 7"><path d="M1.5 3 L3.0 4.3 L4.5 3" fill="none" stroke="#c0c0c0" stroke-width="0.7"/></svg><div class="a" style="left:177px;top:20px;width:9px;height:9px;background:#2c2c2c;border-radius:1px"></div><svg class="a" style="left:177px;top:20px" width="9" height="9" viewBox="0 0 9 9"><rect x="3.5" y="1.5" width="2" height="2.5" fill="none" stroke="#bdbdbd" stroke-width="0.7"/><rect x="3.5" y="5" width="2" height="2.5" fill="none" stroke="#bdbdbd" stroke-width="0.7"/></svg><svg class="a" style="left:190px;top:16px" width="7" height="7" viewBox="0 0 7 7"><path d="M0.5 6 L6 6 L3.5 1.5 Z" fill="none" stroke="#c4c4c4" stroke-width="0.8"/></svg><svg class="a" style="left:190px;top:27px" width="7" height="7" viewBox="0 0 7 7"><path d="M2 1 L6.5 1 L5 6 L0.5 6 Z" fill="#c4c4c4"/></svg><div class="a" style="left:198px;top:16px;width:6px;height:7px;background:#4a4a4a;border:0.5px solid #3e3e3e"></div><svg class="a" style="left:198px;top:16px" width="6" height="7" viewBox="0 0 6 7"><path d="M1.5 2.6 L3 1.2 L4.5 2.6" fill="none" stroke="#b8b8b8" stroke-width="0.7"/><path d="M1.5 4.4 L3 5.8 L4.5 4.4" fill="none" stroke="#b8b8b8" stroke-width="0.7"/></svg><div class="a" style="left:198px;top:27px;width:6px;height:7px;background:#4a4a4a;border:0.5px solid #3e3e3e"></div><svg class="a" style="left:198px;top:27px" width="6" height="7" viewBox="0 0 6 7"><path d="M1.5 2.6 L3 1.2 L4.5 2.6" fill="none" stroke="#b8b8b8" stroke-width="0.7"/><path d="M1.5 4.4 L3 5.8 L4.5 4.4" fill="none" stroke="#b8b8b8" stroke-width="0.7"/></svg><div class="a" style="left:205px;top:16px;width:22px;height:7px;background:#474747;"></div><div class="a" style="left:206.5px;top:16.6px;font-size:5.3px;line-height:6.3px;color:#e2e2e2;font-weight:bold;white-space:nowrap;transform:scaleX(0.987);transform-origin:0 0;">0°</div><div class="a" style="left:205px;top:27px;width:22px;height:7px;background:#474747;"></div><div class="a" style="left:206.5px;top:27.6px;font-size:5.3px;line-height:6.3px;color:#e2e2e2;font-weight:bold;white-space:nowrap;transform:scaleX(0.987);transform-origin:0 0;">0°</div><div class="a" style="left:227px;top:16px;width:6px;height:7px;background:#4a4a4a;"></div><svg class="a" style="left:227px;top:16px" width="6" height="7" viewBox="0 0 6 7"><path d="M1.5 3 L3.0 4.3 L4.5 3" fill="none" stroke="#c0c0c0" stroke-width="0.7"/></svg><div class="a" style="left:227px;top:27px;width:6px;height:7px;background:#4a4a4a;"></div><svg class="a" style="left:227px;top:27px" width="6" height="7" viewBox="0 0 6 7"><path d="M1.5 3 L3.0 4.3 L4.5 3" fill="none" stroke="#c0c0c0" stroke-width="0.7"/></svg><svg class="a" style="left:239px;top:15.5px" width="9" height="9" viewBox="0 0 9 9"><path d="M6.9 6.2 A3.2 3.2 0 1 1 7.2 3" fill="none" stroke="#c4c4c4" stroke-width="0.9"/><path d="M7.6 0.8 L7.4 3.3 L5 3" fill="none" stroke="#c4c4c4" stroke-width="0.8"/></svg><svg class="a" style="left:250px;top:15.5px" width="9" height="9" viewBox="0 0 9 9"><path d="M2.1 6.2 A3.2 3.2 0 1 0 1.8 3" fill="none" stroke="#c4c4c4" stroke-width="0.9"/><path d="M1.4 0.8 L1.6 3.3 L4 3" fill="none" stroke="#c4c4c4" stroke-width="0.8"/></svg><svg class="a" style="left:239px;top:27px" width="8" height="8" viewBox="0 0 8 8"><path d="M0.5 1 L3 4 L0.5 7 Z" fill="none" stroke="#c4c4c4" stroke-width="0.7"/><path d="M7.5 1 L5 4 L7.5 7 Z" fill="#d0d0d0"/></svg><svg class="a" style="left:250px;top:27px" width="8" height="9" viewBox="0 0 8 9"><path d="M1 0.5 L4 3 L7 0.5 Z" fill="none" stroke="#c4c4c4" stroke-width="0.7"/><path d="M1 8.5 L4 6 L7 8.5 Z" fill="#e0e0e0"/></svg><div class="a" style="left:264.5px;top:18.5px;font-size:10px;line-height:11px;color:#d4d4d4;font-weight:bold;white-space:nowrap;font-family:'Liberation Serif',serif;line-height:10px">P</div><div class="a" style="left:262px;top:19px;width:1.5px;height:1.5px;background:#a8a8a8;border-radius:1px"></div><div class="a" style="left:272px;top:19px;width:1.5px;height:1.5px;background:#a8a8a8;border-radius:1px"></div><div class="a" style="left:262px;top:29px;width:1.5px;height:1.5px;background:#a8a8a8;border-radius:1px"></div><div class="a" style="left:272px;top:29px;width:1.5px;height:1.5px;background:#a8a8a8;border-radius:1px"></div><svg class="a" style="left:281px;top:16px" width="6" height="8" viewBox="0 0 6 8"><path d="M3 0.5 V7.5 M1 3 H5 M1.5 6.5 H4.5" stroke="#b8b8b8" stroke-width="0.8"/></svg><svg class="a" style="left:281px;top:27px" width="6" height="8" viewBox="0 0 6 8"><path d="M3 0.5 V7.5 M1 3.5 H5 M1 5 H5" stroke="#b8b8b8" stroke-width="0.8"/></svg><svg class="a" style="left:290px;top:16px" width="9" height="7" viewBox="0 0 9 7"><path d="M0.5 6 L2 3 L3.5 6 M4 6 L5.5 1.5 L7 6" fill="none" stroke="#d0d0d0" stroke-width="0.9"/><circle cx="8" cy="5" r="0.8" fill="#d88"/></svg><svg class="a" style="left:290px;top:27px" width="9" height="7" viewBox="0 0 9 7"><path d="M0.5 6.5 H8.5 M1.5 6 V3 M4 6 V1.5 M6.5 6 V3" fill="none" stroke="#d0d0d0" stroke-width="1"/></svg><svg class="a" style="left:304px;top:16px" width="8" height="8" viewBox="0 0 8 8"><rect x="0.5" y="0.5" width="7" height="7" fill="#ffffff" stroke="#cfcfcf" stroke-width="0.5"/><path d="M0.8 7.2 L7.2 0.8" stroke="#ee2a2a" stroke-width="1.1"/></svg><svg class="a" style="left:304px;top:27px" width="8" height="8" viewBox="0 0 8 8"><rect x="0.5" y="0.5" width="7" height="7" fill="#ffffff" stroke="#cfcfcf" stroke-width="0.5"/><rect x="2.3" y="2.3" width="3.4" height="3.4" fill="#3c3c3c"/><path d="M0.8 7.2 L7.2 0.8" stroke="#ee2a2a" stroke-width="1.1"/></svg><div class="a" style="left:314px;top:16px;width:5px;height:7px;background:#4a4a4a;"></div><svg class="a" style="left:314px;top:16px" width="5" height="7" viewBox="0 0 5 7"><path d="M1.0 3 L2.5 4.3 L4.0 3" fill="none" stroke="#c0c0c0" stroke-width="0.7"/></svg><div class="a" style="left:314px;top:27px;width:5px;height:7px;background:#4a4a4a;"></div><svg class="a" style="left:314px;top:27px" width="5" height="7" viewBox="0 0 5 7"><path d="M1.0 3 L2.5 4.3 L4.0 3" fill="none" stroke="#c0c0c0" stroke-width="0.7"/></svg><div class="a" style="left:326px;top:16px;width:6px;height:7px;background:#4a4a4a;border:0.5px solid #3e3e3e"></div><svg class="a" style="left:326px;top:16px" width="6" height="7" viewBox="0 0 6 7"><path d="M1.5 2.6 L3 1.2 L4.5 2.6" fill="none" stroke="#b8b8b8" stroke-width="0.7"/><path d="M1.5 4.4 L3 5.8 L4.5 4.4" fill="none" stroke="#b8b8b8" stroke-width="0.7"/></svg><div class="a" style="left:333px;top:16px;width:20px;height:7px;background:#474747;"></div><div class="a" style="left:334.5px;top:16.6px;font-size:5.3px;line-height:6.3px;color:#e2e2e2;font-weight:bold;white-space:nowrap;transform:scaleX(0.796);transform-origin:0 0;">0 pt</div><div class="a" style="left:354px;top:16px;width:6px;height:7px;background:#4a4a4a;"></div><svg class="a" style="left:354px;top:16px" width="6" height="7" viewBox="0 0 6 7"><path d="M1.5 3 L3.0 4.3 L4.5 3" fill="none" stroke="#c0c0c0" stroke-width="0.7"/></svg><div class="a" style="left:325px;top:26px;width:28px;height:8px;background:#f2f2f2;border:0.5px solid #999"></div><div class="a" style="left:327px;top:28.5px;width:24px;height:3px;background:#000000;"></div><div class="a" style="left:355px;top:27px;width:6px;height:7px;background:#4a4a4a;"></div><svg class="a" style="left:355px;top:27px" width="6" height="7" viewBox="0 0 6 7"><path d="M1.5 3 L3.0 4.3 L4.5 3" fill="none" stroke="#c0c0c0" stroke-width="0.7"/></svg><svg class="a" style="left:367px;top:16px" width="8" height="8" viewBox="0 0 8 8"><rect x="1" y="1" width="5" height="5" fill="none" stroke="#c4c4c4" stroke-width="0.8"/><path d="M6 6 L7.5 7.5" stroke="#c4c4c4" stroke-width="0.8"/></svg><svg class="a" style="left:379px;top:16px" width="8" height="8" viewBox="0 0 8 8"><rect x="1" y="1" width="6" height="6" fill="none" stroke="#c4c4c4" stroke-width="0.8"/><rect x="2.5" y="5" width="3" height="1" fill="#c4c4c4"/></svg><div class="a" style="left:391px;top:15.5px;font-size:7px;line-height:8px;color:#c0c0c0;font-weight:normal;white-space:nowrap;font-style:italic">fx</div><svg class="a" style="left:367px;top:27px" width="7" height="8" viewBox="0 0 7 8"><rect x="0.5" y="1" width="6" height="6" fill="none" stroke="#b0b0b0" stroke-width="0.8"/><rect x="2" y="2.5" width="3" height="3" fill="#b0b0b0"/></svg><div class="a" style="left:374px;top:27px;width:21px;height:7px;background:#474747;"></div><div class="a" style="left:375.5px;top:27.6px;font-size:5.3px;line-height:6.3px;color:#e2e2e2;font-weight:bold;white-space:nowrap;transform:scaleX(0.701);transform-origin:0 0;">100%</div><div class="a" style="left:396px;top:27px;width:4px;height:7px;background:#4a4a4a;"></div><svg class="a" style="left:396px;top:27px" width="4" height="7" viewBox="0 0 4 7"><path d="M0.5 3 L2.0 4.3 L3.5 3" fill="none" stroke="#c0c0c0" stroke-width="0.7"/></svg><div class="a" style="left:408px;top:15px;width:8px;height:9px;background:#2e2e2e;border:0.5px solid #222"></div><div class="a" style="left:410px;top:17.5px;width:4px;height:4px;background:#9a9a9a;"></div><svg class="a" style="left:420px;top:15px" width="8" height="9" viewBox="0 0 8 9"><rect x="0.5" y="1" width="7" height="7" fill="none" stroke="#8e8e8e" stroke-width="0.8"/><rect x="2" y="2.5" width="4" height="4" fill="#7a7a7a"/></svg><svg class="a" style="left:409px;top:27px" width="7" height="8" viewBox="0 0 7 8"><rect x="0.5" y="0.5" width="6" height="7" fill="#e0e0e0"/><rect x="1.5" y="2.5" width="4" height="3" fill="#9a9a9a"/></svg><svg class="a" style="left:421px;top:27px" width="7" height="8" viewBox="0 0 7 8"><path d="M0.5 1 H6.5 M0.5 7 H6.5" stroke="#c0c0c0" stroke-width="0.8"/><path d="M1.5 3 L3.5 5 L5.5 3 Z" fill="#d0d0d0"/></svg><svg class="a" style="left:432px;top:15px" width="9" height="9" viewBox="0 0 9 9"><rect x="1" y="1" width="2.4" height="2.4" fill="#2e8cf0"/><rect x="5.6" y="1" width="2.4" height="2.4" fill="#2e8cf0"/><rect x="1" y="5.6" width="2.4" height="2.4" fill="#2e8cf0"/><rect x="5.6" y="5.6" width="2.4" height="2.4" fill="#2e8cf0"/><path d="M3.4 2.2 H5.6 M3.4 6.8 H5.6 M2.2 3.4 V5.6 M6.8 3.4 V5.6" stroke="#885050" stroke-width="0.5"/></svg><div class="a" style="left:442px;top:16px;width:6px;height:7px;background:#4a4a4a;border:0.5px solid #3e3e3e"></div><svg class="a" style="left:442px;top:16px" width="6" height="7" viewBox="0 0 6 7"><path d="M1.5 2.6 L3 1.2 L4.5 2.6" fill="none" stroke="#b8b8b8" stroke-width="0.7"/><path d="M1.5 4.4 L3 5.8 L4.5 4.4" fill="none" stroke="#b8b8b8" stroke-width="0.7"/></svg><div class="a" style="left:449px;top:16px;width:27px;height:7px;background:#474747;"></div><div class="a" style="left:450.5px;top:16.6px;font-size:5.3px;line-height:6.3px;color:#e2e2e2;font-weight:bold;white-space:nowrap;transform:scaleX(0.745);transform-origin:0 0;">4.233 mm</div><div class="a" style="left:441px;top:26px;width:28px;height:8px;background:#ececec;border:0.7px solid #b8b8b8"></div><div class="a" style="left:470px;top:27px;width:6px;height:7px;background:#4a4a4a;"></div><svg class="a" style="left:470px;top:27px" width="6" height="7" viewBox="0 0 6 7"><path d="M1.5 3 L3.0 4.3 L4.5 3" fill="none" stroke="#c0c0c0" stroke-width="0.7"/></svg><div class="a" style="left:482px;top:27.5px;width:5px;height:5px;border:0.7px solid #a8a8a8"></div><div class="a" style="left:489px;top:27.6px;font-size:5px;line-height:6px;color:#d4d4d4;font-weight:normal;white-space:nowrap;transform:scaleX(0.771);transform-origin:0 0;">Auto-Fit</div><svg class="a" style="left:482.5px;top:16px" width="8" height="8" viewBox="0 0 8 8"><path d="M0.5 0.8 H7.5 M0.5 7.2 H7.5" stroke="#cdcdcd" stroke-width="1"/><rect x="1.5" y="2" width="5" height="4" fill="#cdcdcd"/><rect x="2.5" y="3" width="3" height="2" fill="#7a7a7a"/></svg><svg class="a" style="left:494px;top:16px" width="8" height="8" viewBox="0 0 8 8"><path d="M0.8 0.5 V7.5 M7.2 0.5 V7.5" stroke="#cdcdcd" stroke-width="1"/><rect x="2" y="1" width="4" height="6" fill="#cdcdcd"/><rect x="3" y="2.5" width="2" height="3" fill="#7a7a7a"/></svg><svg class="a" style="left:508px;top:16px" width="8" height="8" viewBox="0 0 8 8"><path d="M0.5 2 V0.5 H2 M6 0.5 H7.5 V2 M7.5 6 V7.5 H6 M2 7.5 H0.5 V6" fill="none" stroke="#cdcdcd" stroke-width="0.8"/><rect x="2.3" y="2.3" width="3.4" height="3.4" fill="#cdcdcd"/><rect x="3.3" y="3.3" width="1.4" height="1.4" fill="#6a6a6a"/></svg><svg class="a" style="left:519.5px;top:16px" width="8" height="8" viewBox="0 0 8 8"><path d="M0.5 2 V0.5 H2 M6 0.5 H7.5 V2 M7.5 6 V7.5 H6 M2 7.5 H0.5 V6" fill="none" stroke="#cdcdcd" stroke-width="0.8"/><rect x="2.3" y="2.3" width="3.4" height="3.4" fill="#cdcdcd"/><rect x="3.3" y="3.3" width="1.4" height="1.4" fill="#6a6a6a"/></svg><svg class="a" style="left:531px;top:16px" width="8" height="8" viewBox="0 0 8 8"><path d="M0.5 2 V0.5 H2 M6 0.5 H7.5 V2 M7.5 6 V7.5 H6 M2 7.5 H0.5 V6" fill="none" stroke="#cdcdcd" stroke-width="0.8"/><rect x="2.3" y="2.3" width="3.4" height="3.4" fill="#cdcdcd"/><rect x="3.3" y="3.3" width="1.4" height="1.4" fill="#6a6a6a"/></svg><svg class="a" style="left:545px;top:16px" width="8" height="9" viewBox="0 0 8 9"><rect x="1.5" y="0.8" width="4" height="2" fill="#cdcdcd"/><path d="M0.5 3.8 H7.5" stroke="#cdcdcd" stroke-width="0.7"/><rect x="1" y="4.8" width="5.5" height="2.2" fill="#cdcdcd"/><path d="M0.5 7.8 H7.5" stroke="#cdcdcd" stroke-width="0.6"/></svg><svg class="a" style="left:556.5px;top:16px" width="8" height="9" viewBox="0 0 8 9"><rect x="1.5" y="0.8" width="4" height="2" fill="#cdcdcd"/><path d="M0.5 3.8 H7.5" stroke="#cdcdcd" stroke-width="0.7"/><rect x="1" y="4.8" width="5.5" height="2.2" fill="#cdcdcd"/><path d="M0.5 7.8 H7.5" stroke="#cdcdcd" stroke-width="0.6"/></svg><svg class="a" style="left:568px;top:16px" width="8" height="9" viewBox="0 0 8 9"><rect x="1.5" y="0.8" width="4" height="2" fill="#cdcdcd"/><path d="M0.5 3.8 H7.5" stroke="#cdcdcd" stroke-width="0.7"/><rect x="1" y="4.8" width="5.5" height="2.2" fill="#cdcdcd"/><path d="M0.5 7.8 H7.5" stroke="#cdcdcd" stroke-width="0.6"/></svg><svg class="a" style="left:580px;top:16px" width="8" height="9" viewBox="0 0 8 9"><path d="M0.5 0.5 V7 H7.5 M0.5 0.5 H7 V7" fill="none" stroke="#b8b8b8" stroke-width="0.6" stroke-dasharray="1,1"/><circle cx="6.8" cy="6.8" r="0.9" fill="#c8c8c8"/></svg><svg class="a" style="left:597px;top:16px" width="8" height="8" viewBox="0 0 8 8"><rect x="0.5" y="0.5" width="5.5" height="5.5" fill="none" stroke="#c4c4c4" stroke-width="0.8"/><rect x="2" y="2" width="2.5" height="2.5" fill="#c4c4c4"/><path d="M5.5 5.5 L7.5 7.5" stroke="#c4c4c4" stroke-width="0.8"/></svg><svg class="a" style="left:546px;top:27px" width="8" height="9" viewBox="0 0 8 9"><rect x="0.5" y="0.5" width="1.5" height="7.5" fill="#d0d0d0"/><rect x="2.8" y="2" width="3.7" height="4" fill="#d0d0d0"/><rect x="3.6" y="2.8" width="2" height="2.4" fill="#888"/></svg><svg class="a" style="left:557px;top:27px" width="8" height="9" viewBox="0 0 8 9"><rect x="0.5" y="0.5" width="1.5" height="7.5" fill="#d0d0d0"/><rect x="2.8" y="2" width="3.7" height="4" fill="#d0d0d0"/><rect x="3.6" y="2.8" width="2" height="2.4" fill="#888"/></svg><svg class="a" style="left:568px;top:27px" width="8" height="9" viewBox="0 0 8 9"><rect x="0.5" y="0.5" width="1.5" height="7.5" fill="#d0d0d0"/><rect x="2.8" y="2" width="3.7" height="4" fill="#d0d0d0"/><rect x="3.6" y="2.8" width="2" height="2.4" fill="#888"/></svg><div class="a" style="left:609px;top:15px;width:68px;height:8px;background:#ececec;"></div><div class="a" style="left:611px;top:16.3px;font-size:5px;line-height:6px;color:#444444;font-weight:normal;white-space:nowrap;transform:scaleX(0.793);transform-origin:0 0;">[None]+</div><div class="a" style="left:677px;top:15px;width:6px;height:8px;background:#3a3a3a;"></div><svg class="a" style="left:677px;top:15px" width="6" height="8" viewBox="0 0 6 8"><path d="M1.5 3.5 L3 5 L4.5 3.5" fill="none" stroke="#c0c0c0" stroke-width="0.7"/></svg><svg class="a" style="left:662px;top:28px" width="8" height="6" viewBox="0 0 8 6"><rect x="0.5" y="1" width="2.5" height="3" fill="#ffffff"/><path d="M4 1 V5 M6 2 V5" stroke="#b0b0b0" stroke-width="0.7"/></svg><svg class="a" style="left:674px;top:28px" width="9" height="6" viewBox="0 0 9 6"><rect x="0.5" y="0.5" width="5" height="4" fill="none" stroke="#b0b0b0" stroke-width="0.7"/><path d="M5.5 2.5 L8 2.5 L7 1.5" fill="none" stroke="#b0b0b0" stroke-width="0.7"/></svg><div class="a" style="left:22.5px;top:40.3px;font-size:5.2px;line-height:6.2px;color:#ececec;font-weight:bold;white-space:nowrap;transform:scaleX(0.884);transform-origin:0 0;">*Konturschrift_indd.indd @ 100% [Converted]</div><svg class="a" style="left:124px;top:40px" width="5" height="6" viewBox="0 0 5 6"><path d="M1.4 2 L3.6 4.2 M3.6 2 L1.4 4.2" stroke="#e8e8e8" stroke-width="1.1"/></svg><div class="a" style="left:2px;top:39.5px;width:5px;height:1.5px;background:#8a8a8a;border-radius:1px"></div>
<div class="a" style="left:2px;top:48.5px;width:11px;height:9px;background:#3c3c3c;border-radius:1px"></div><svg class="a" style="left:2px;top:48px" width="12" height="10" viewBox="0 0 12 10"><path d="M4 1.5 L9 5 L6.3 5.5 L7.5 8.2 L6.5 8.6 L5.3 6 L4 7.5 Z" fill="none" stroke="#b0b0b0" stroke-width="0.8"/></svg><svg class="a" style="left:2px;top:59px" width="12" height="9" viewBox="0 0 12 9"><path d="M4 1 L10 5 L7 5.5 L8.3 8 L7.2 8.5 L6 6 L4 7.5 Z" fill="#b0b0b0"/></svg><svg class="a" style="left:2px;top:69px" width="12" height="9" viewBox="0 0 12 9"><path d="M4 1 L8 4.5 L6 5 L4 7 Z" fill="#b0b0b0"/><path d="M4 7.5 H10 V4" fill="none" stroke="#b0b0b0" stroke-width="0.8"/></svg><svg class="a" style="left:2px;top:78px" width="12" height="9" viewBox="0 0 12 9"><path d="M3.5 1 V8 M9.5 1 V8 M3.5 4.5 H9.5" stroke="#b0b0b0" stroke-width="0.9"/></svg><svg class="a" style="left:2px;top:88px" width="12" height="9" viewBox="0 0 12 9"><rect x="2.5" y="4.5" width="7" height="3.5" fill="#b0b0b0"/><path d="M5 1 V4 M4 3 L5 4 L6 3" stroke="#b0b0b0" stroke-width="0.8" fill="none"/><circle cx="11" cy="8" r="0.5" fill="#b0b0b0"/></svg><svg class="a" style="left:2px;top:99px" width="12" height="9" viewBox="0 0 12 9"><path d="M2.5 1.5 H10 M6.2 1.5 V8" stroke="#b0b0b0" stroke-width="1.2"/><path d="M2.5 1 V2.5 M10 1 V2.5" stroke="#b0b0b0" stroke-width="0.6"/></svg><svg class="a" style="left:2px;top:110px" width="12" height="9" viewBox="0 0 12 9"><path d="M2.5 8 L9.5 1.5" stroke="#b0b0b0" stroke-width="0.9"/></svg><svg class="a" style="left:2px;top:120px" width="12" height="9" viewBox="0 0 12 9"><path d="M3 7.5 L6 2 L9.5 3.5 L7 8 Z" fill="#b0b0b0"/><path d="M2.5 8.5 L4 6.5" stroke="#b0b0b0" stroke-width="0.7"/></svg><svg class="a" style="left:2px;top:129px" width="12" height="10" viewBox="0 0 12 10"><path d="M2.5 8.5 L3.5 6 L8.5 1.5 L10 3 L5 7.5 Z" fill="#b0b0b0"/></svg><svg class="a" style="left:2px;top:139px" width="12" height="9" viewBox="0 0 12 9"><rect x="3" y="1" width="7" height="7" fill="none" stroke="#b0b0b0" stroke-width="0.8"/><path d="M3 1 L10 8 M10 1 L3 8" stroke="#b0b0b0" stroke-width="0.7"/></svg><svg class="a" style="left:2px;top:149px" width="12" height="9" viewBox="0 0 12 9"><rect x="3" y="1" width="7" height="7" fill="none" stroke="#b0b0b0" stroke-width="0.9"/><rect x="4.5" y="2.5" width="4" height="4" fill="#4a4a4a"/></svg><svg class="a" style="left:2px;top:160px" width="12" height="9" viewBox="0 0 12 9"><path d="M3 2 L9.5 7 M9.5 2 L3 7" stroke="#b0b0b0" stroke-width="0.9"/><circle cx="2.5" cy="7.5" r="1" fill="none" stroke="#b0b0b0" stroke-width="0.6"/></svg><svg class="a" style="left:2px;top:169px" width="12" height="10" viewBox="0 0 12 10"><path d="M3 1.5 L7 4.5 L5 5 L3 7 Z" fill="#b0b0b0"/><rect x="5" y="2.5" width="5" height="5" fill="none" stroke="#b0b0b0" stroke-width="0.7"/></svg><div class="a" style="left:4px;top:180px;width:7px;height:7px;background:linear-gradient(90deg,#e0e0e0,#6a6a6a);border:0.6px solid #c8c8c8"></div><div class="a" style="left:4px;top:190px;width:7px;height:7px;background:linear-gradient(180deg,#e0e0e0,#6a6a6a);border:0.6px solid #c8c8c8"></div><svg class="a" style="left:2px;top:201px" width="12" height="9" viewBox="0 0 12 9"><path d="M3.5 1 H9 V8 H3.5 Z" fill="#b0b0b0"/><path d="M4.5 3 H8 M4.5 4.5 H8 M4.5 6 H7" stroke="#555" stroke-width="0.5"/></svg><svg class="a" style="left:2px;top:210px" width="12" height="10" viewBox="0 0 12 10"><path d="M2.5 8.5 L7 4 L8 5 L3.5 9.5 Z" fill="#b0b0b0"/><circle cx="9" cy="3" r="1.8" fill="#b0b0b0"/></svg><svg class="a" style="left:2px;top:221px" width="12" height="9" viewBox="0 0 12 9"><path d="M3 4 L5 2 L8 1.5 L10 3 L9.5 7 L6 8.5 L4 7 Z" fill="#b0b0b0"/></svg><svg class="a" style="left:2px;top:231px" width="12" height="10" viewBox="0 0 12 10"><circle cx="5.5" cy="4.5" r="2.5" fill="none" stroke="#b0b0b0" stroke-width="0.8"/><path d="M7.3 6.3 L10 9" stroke="#b0b0b0" stroke-width="1"/></svg><svg class="a" style="left:1px;top:240px" width="14" height="7" viewBox="0 0 14 7"><rect x="1" y="1.5" width="3" height="3" fill="#cc5577"/><rect x="2" y="2.5" width="3" height="3" fill="none" stroke="#aaa" stroke-width="0.5"/><path d="M9 1.5 H12 V4.5 M11 3.5 L12 4.5 L13 3.5" fill="none" stroke="#bbb" stroke-width="0.6"/></svg><svg class="a" style="left:1px;top:248px" width="14" height="14" viewBox="0 0 14 14"><rect x="5" y="5" width="8" height="8" fill="#ffffff" stroke="#d0d0d0" stroke-width="0.4"/><rect x="7.2" y="7.2" width="3.6" height="3.6" fill="#4a4a4a"/><path d="M5.3 12.7 L12.7 5.3" stroke="#ee2a2a" stroke-width="1"/><rect x="0.8" y="0.8" width="8.2" height="8.2" fill="#ffffff" stroke="#d0d0d0" stroke-width="0.4"/><path d="M1.1 8.7 L8.7 1.1" stroke="#ee2a2a" stroke-width="1.1"/></svg><svg class="a" style="left:1px;top:262px" width="14" height="7" viewBox="0 0 14 7"><rect x="1.5" y="1.5" width="4" height="4" fill="none" stroke="#9a9a9a" stroke-width="0.6"/><path d="M10 1.5 H13 M11.5 1.5 V5.5" stroke="#8a8a8a" stroke-width="0.7"/></svg><svg class="a" style="left:2px;top:271px" width="12" height="10" viewBox="0 0 12 10"><rect x="0.8" y="0.8" width="10.4" height="8.4" fill="#2c2c2c"/><rect x="2" y="2" width="8" height="6" fill="#ffffff"/><path d="M2.3 7.7 L9.7 2.3" stroke="#ee2a2a" stroke-width="1"/></svg><svg class="a" style="left:3px;top:284px" width="10" height="10" viewBox="0 0 10 10"><rect x="0.5" y="0.5" width="9" height="9" fill="#3a3a3a"/><rect x="2.5" y="2.5" width="5" height="5" fill="#8a8a8a"/></svg><div class="a" style="left:3px;top:296px;width:1px;height:0.6px;background:#6a6a6a;"></div><div class="a" style="left:5px;top:296px;width:1px;height:0.6px;background:#6a6a6a;"></div><div class="a" style="left:7px;top:296px;width:1px;height:0.6px;background:#6a6a6a;"></div><div class="a" style="left:9px;top:296px;width:1px;height:0.6px;background:#6a6a6a;"></div><div class="a" style="left:11px;top:296px;width:1px;height:0.6px;background:#6a6a6a;"></div><svg class="a" style="left:16px;top:49px" width="6" height="6" viewBox="0 0 6 6"><path d="M0 3.5 H6 M3.5 0 V6" stroke="#5a5a5a" stroke-width="0.6" stroke-dasharray="0.8,0.6"/></svg><div class="a" style="left:15px;top:36px;width:1px;height:532px;background:#474747;"></div><div class="a" style="left:936px;top:36px;width:1px;height:540px;background:#3e3e3e;"></div><div class="a" style="left:984px;top:42px;width:1px;height:534px;background:#3e3e3e;"></div><svg class="a" style="left:978px;top:37px" width="6" height="5" viewBox="0 0 6 5"><path d="M1.8 1.2 L0.8 2.5 L1.8 3.8 M4.2 1.2 L3.2 2.5 L4.2 3.8" stroke="#d8d8d8" stroke-width="0.6" fill="none"/></svg><div class="a" style="left:953px;top:44.5px;width:1px;height:0.6px;background:#626262;"></div><div class="a" style="left:955px;top:44.5px;width:1px;height:0.6px;background:#626262;"></div><div class="a" style="left:957px;top:44.5px;width:1px;height:0.6px;background:#626262;"></div><div class="a" style="left:959px;top:44.5px;width:1px;height:0.6px;background:#626262;"></div><div class="a" style="left:961px;top:44.5px;width:1px;height:0.6px;background:#626262;"></div><div class="a" style="left:963px;top:44.5px;width:1px;height:0.6px;background:#626262;"></div><div class="a" style="left:965px;top:44.5px;width:1px;height:0.6px;background:#626262;"></div><div class="a" style="left:1000px;top:44.5px;width:1px;height:0.6px;background:#626262;"></div><div class="a" style="left:1002px;top:44.5px;width:1px;height:0.6px;background:#626262;"></div><div class="a" style="left:1004px;top:44.5px;width:1px;height:0.6px;background:#626262;"></div><div class="a" style="left:1006px;top:44.5px;width:1px;height:0.6px;background:#626262;"></div><div class="a" style="left:1008px;top:44.5px;width:1px;height:0.6px;background:#626262;"></div><div class="a" style="left:1010px;top:44.5px;width:1px;height:0.6px;background:#626262;"></div><div class="a" style="left:937px;top:81.5px;width:47px;height:1px;background:#474747;"></div><div class="a" style="left:953px;top:83.5px;width:1px;height:0.6px;background:#626262;"></div><div class="a" style="left:955px;top:83.5px;width:1px;height:0.6px;background:#626262;"></div><div class="a" style="left:957px;top:83.5px;width:1px;height:0.6px;background:#626262;"></div><div class="a" style="left:959px;top:83.5px;width:1px;height:0.6px;background:#626262;"></div><div class="a" style="left:961px;top:83.5px;width:1px;height:0.6px;background:#626262;"></div><div class="a" style="left:963px;top:83.5px;width:1px;height:0.6px;background:#626262;"></div><div class="a" style="left:965px;top:83.5px;width:1px;height:0.6px;background:#626262;"></div><div class="a" style="left:937px;top:110px;width:47px;height:1px;background:#474747;"></div><div class="a" style="left:953px;top:112px;width:1px;height:0.6px;background:#626262;"></div><div class="a" style="left:955px;top:112px;width:1px;height:0.6px;background:#626262;"></div><div class="a" style="left:957px;top:112px;width:1px;height:0.6px;background:#626262;"></div><div class="a" style="left:959px;top:112px;width:1px;height:0.6px;background:#626262;"></div><div class="a" style="left:961px;top:112px;width:1px;height:0.6px;background:#626262;"></div><div class="a" style="left:963px;top:112px;width:1px;height:0.6px;background:#626262;"></div><div class="a" style="left:965px;top:112px;width:1px;height:0.6px;background:#626262;"></div><div class="a" style="left:937px;top:138.5px;width:47px;height:1px;background:#474747;"></div><div class="a" style="left:953px;top:140.5px;width:1px;height:0.6px;background:#626262;"></div><div class="a" style="left:955px;top:140.5px;width:1px;height:0.6px;background:#626262;"></div><div class="a" style="left:957px;top:140.5px;width:1px;height:0.6px;background:#626262;"></div><div class="a" style="left:959px;top:140.5px;width:1px;height:0.6px;background:#626262;"></div><div class="a" style="left:961px;top:140.5px;width:1px;height:0.6px;background:#626262;"></div><div class="a" style="left:963px;top:140.5px;width:1px;height:0.6px;background:#626262;"></div><div class="a" style="left:965px;top:140.5px;width:1px;height:0.6px;background:#626262;"></div><div class="a" style="left:937px;top:156.5px;width:47px;height:1px;background:#474747;"></div><div class="a" style="left:953px;top:158.5px;width:1px;height:0.6px;background:#626262;"></div><div class="a" style="left:955px;top:158.5px;width:1px;height:0.6px;background:#626262;"></div><div class="a" style="left:957px;top:158.5px;width:1px;height:0.6px;background:#626262;"></div><div class="a" style="left:959px;top:158.5px;width:1px;height:0.6px;background:#626262;"></div><div class="a" style="left:961px;top:158.5px;width:1px;height:0.6px;background:#626262;"></div><div class="a" style="left:963px;top:158.5px;width:1px;height:0.6px;background:#626262;"></div><div class="a" style="left:965px;top:158.5px;width:1px;height:0.6px;background:#626262;"></div><svg class="a" style="left:940px;top:48.0px" width="9" height="9" viewBox="0 0 9 9"><path d="M0.5 2.5 L4 1.5 L7.5 2.5 V8 L4 7.2 L0.5 8 Z" fill="#dedede"/><path d="M4 1.8 V7.2" stroke="#6a6a6a" stroke-width="0.6"/></svg><div class="a" style="left:951px;top:49.2px;font-size:5.2px;line-height:6.2px;color:#eeeeee;font-weight:bold;white-space:nowrap;transform:scaleX(0.849);transform-origin:0 0;">Pages</div><svg class="a" style="left:940px;top:59.5px" width="9" height="9" viewBox="0 0 9 9"><path d="M4 0.5 L7.5 2.5 L4 4.5 L0.5 2.5 Z" fill="#dedede"/><path d="M0.5 4.5 L4 6.5 L7.5 4.5 M0.5 6 L4 8 L7.5 6" fill="none" stroke="#dedede" stroke-width="0.8"/></svg><div class="a" style="left:951px;top:60.7px;font-size:5.2px;line-height:6.2px;color:#eeeeee;font-weight:bold;white-space:nowrap;transform:scaleX(0.835);transform-origin:0 0;">Layers</div><svg class="a" style="left:940px;top:70.8px" width="9" height="9" viewBox="0 0 9 9"><rect x="0.5" y="2.5" width="3.5" height="3" rx="1" fill="none" stroke="#dedede" stroke-width="0.7"/><rect x="4" y="2.5" width="3.5" height="3" rx="1" fill="none" stroke="#dedede" stroke-width="0.7"/></svg><div class="a" style="left:951px;top:72.0px;font-size:5.2px;line-height:6.2px;color:#eeeeee;font-weight:bold;white-space:nowrap;transform:scaleX(0.810);transform-origin:0 0;">Links</div><svg class="a" style="left:940px;top:87.5px" width="9" height="9" viewBox="0 0 9 9"><path d="M0.5 2 H8 M0.5 4.2 H8" stroke="#dedede" stroke-width="0.7"/><path d="M0.5 6.7 H8" stroke="#dedede" stroke-width="1.3"/></svg><div class="a" style="left:951px;top:88.7px;font-size:5.2px;line-height:6.2px;color:#eeeeee;font-weight:bold;white-space:nowrap;transform:scaleX(0.865);transform-origin:0 0;">Stroke</div><svg class="a" style="left:940px;top:99.1px" width="9" height="9" viewBox="0 0 9 9"><path d="M0.5 6 A3.8 3.5 0 0 1 8 4.5 L8 7.5 L1 7.5 Z" fill="#dedede"/><circle cx="2.5" cy="5.8" r="0.8" fill="#555"/><circle cx="4.5" cy="3.8" r="0.8" fill="#555"/><circle cx="6.5" cy="5.5" r="0.8" fill="#555"/></svg><div class="a" style="left:951px;top:100.3px;font-size:5.2px;line-height:6.2px;color:#eeeeee;font-weight:bold;white-space:nowrap;transform:scaleX(0.866);transform-origin:0 0;">Colour</div><svg class="a" style="left:940px;top:116.1px" width="9" height="9" viewBox="0 0 9 9"><rect x="0.5" y="1.5" width="7.5" height="5.5" fill="none" stroke="#dedede" stroke-width="0.7"/><rect x="1.2" y="2.2" width="3" height="4" fill="#dedede" opacity="0.6"/></svg><div class="a" style="left:951px;top:117.3px;font-size:5.2px;line-height:6.2px;color:#eeeeee;font-weight:bold;white-space:nowrap;transform:scaleX(0.795);transform-origin:0 0;">Gradient</div><svg class="a" style="left:940px;top:127.5px" width="9" height="9" viewBox="0 0 9 9"><rect x="0.5" y="1" width="7.5" height="6.5" fill="#dedede" opacity="0.55"/><rect x="1" y="1.5" width="3" height="3" fill="#dedede"/></svg><div class="a" style="left:951px;top:128.7px;font-size:5.2px;line-height:6.2px;color:#eeeeee;font-weight:bold;white-space:nowrap;transform:scaleX(0.792);transform-origin:0 0;">Swatches</div><svg class="a" style="left:940px;top:144.5px" width="9" height="9" viewBox="0 0 9 9"><path d="M2.5 1 H7.5 V8 H0.5 V3" fill="none" stroke="#dedede" stroke-width="1"/><rect x="2.5" y="3.5" width="3.5" height="3" fill="#dedede"/><path d="M0.3 0.3 L3 3 M0.3 2 V0.3 H2" stroke="#dedede" stroke-width="0.9" fill="none"/></svg><div class="a" style="left:951px;top:145.7px;font-size:5.2px;line-height:6.2px;color:#eeeeee;font-weight:bold;white-space:nowrap;transform:scaleX(0.855);transform-origin:0 0;">Attributes</div><div class="a" style="left:985px;top:58.5px;width:39px;height:0.8px;background:#474747;"></div><svg class="a" style="left:988px;top:48px" width="11" height="8" viewBox="0 0 11 8"><path d="M2 7 A2.2 2.2 0 0 1 2.5 2.8 A3 3 0 0 1 8 2.5 A2.3 2.3 0 0 1 9 7 Z" fill="#b4b4b4"/></svg><div class="a" style="left:1000.5px;top:49px;font-size:5.3px;line-height:6.3px;color:#dcdcdc;font-weight:normal;white-space:nowrap;transform:scaleX(0.917);transform-origin:0 0;">CC Libraries</div><div class="a" style="left:202px;top:569px;width:726px;height:7px;background:#474747;"></div><div class="a" style="left:354px;top:569.5px;width:426px;height:6.5px;background:#616161;border-radius:3px"></div><svg class="a" style="left:919px;top:569px" width="9" height="7" viewBox="0 0 9 7"><path d="M1 3.5 L3 1.5 L3 5.5 Z M8 3.5 L6 1.5 L6 5.5 Z" fill="#d0d0d0"/><rect x="3.5" y="2.8" width="2" height="1.4" fill="#d0d0d0"/></svg><svg class="a" style="left:21px;top:570px" width="6" height="6" viewBox="0 0 6 6"><path d="M1 1 V5 M5 1 L2 3 L5 5 Z" stroke="#8a8a8a" fill="#8a8a8a" stroke-width="0.5"/></svg><svg class="a" style="left:30px;top:570px" width="5" height="6" viewBox="0 0 5 6"><path d="M4 1 L1.5 3 L4 5 Z" fill="#8a8a8a"/></svg><div class="a" style="left:39px;top:570px;width:30px;height:6px;background:#474747;"></div><div class="a" style="left:41px;top:570px;font-size:5px;line-height:6px;color:#d8d8d8;font-weight:normal;white-space:nowrap;">1</div><div class="a" style="left:69px;top:570px;width:6px;height:6px;background:#3e3e3e;"></div><svg class="a" style="left:69px;top:570px" width="6" height="6" viewBox="0 0 6 6"><path d="M1.5 2.5 L3 4 L4.5 2.5" fill="none" stroke="#c0c0c0" stroke-width="0.7"/></svg><svg class="a" style="left:79px;top:570px" width="5" height="6" viewBox="0 0 5 6"><path d="M1 1 L3.5 3 L1 5 Z" fill="#8a8a8a"/></svg><svg class="a" style="left:88px;top:570px" width="6" height="6" viewBox="0 0 6 6"><path d="M5 1 V5 M1 1 L4 3 L1 5 Z" stroke="#8a8a8a" fill="#8a8a8a" stroke-width="0.5"/></svg><svg class="a" style="left:97px;top:568.5px" width="9" height="7.5" viewBox="0 0 9 7.5"><path d="M1.5 6.5 A3 3 0 0 1 7.5 6.5" fill="none" stroke="#e0e0e0" stroke-width="1.3"/><path d="M4.5 6 L6.2 2.8" stroke="#e0e0e0" stroke-width="0.8"/></svg><div class="a" style="left:112px;top:569.6px;font-size:5.2px;line-height:6.2px;color:#cfcfcf;font-weight:normal;white-space:nowrap;transform:scaleX(0.885);transform-origin:0 0;">[Basic] (working)</div><svg class="a" style="left:154px;top:570px" width="5" height="6" viewBox="0 0 5 6"><path d="M1 2.5 L2.5 4 L4 2.5" fill="none" stroke="#a0a0a0" stroke-width="0.7"/></svg><div class="a" style="left:163.5px;top:570px;width:5px;height:5px;border-radius:50%;background:#3cc43c"></div><div class="a" style="left:170.5px;top:569.6px;font-size:5.2px;line-height:6.2px;color:#cfcfcf;font-weight:normal;white-space:nowrap;transform:scaleX(0.785);transform-origin:0 0;">No errors</div><svg class="a" style="left:195px;top:570px" width="5" height="6" viewBox="0 0 5 6"><path d="M1 2.5 L2.5 4 L4 2.5" fill="none" stroke="#a0a0a0" stroke-width="0.7"/></svg><div class="a" style="left:204px;top:570px;width:0.6px;height:5px;background:#6a6a6a;"></div>
</div></body></html>
